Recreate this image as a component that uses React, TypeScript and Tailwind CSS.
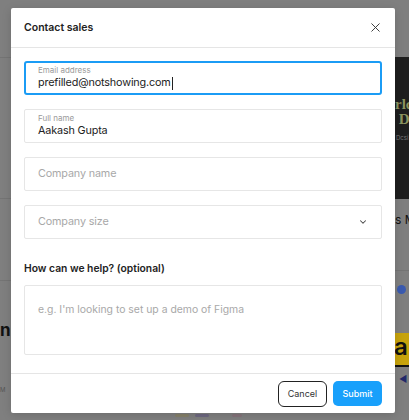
import { ChevronDown, X } from "lucide-react";

function Field({
  label,
  value,
  placeholder,
  active,
}: {
  label?: string;
  value?: string;
  placeholder?: string;
  active?: boolean;
}) {
  return (
    <div
      className={`h-[34px] flex flex-col justify-center bg-white ${
        active ? "border-2 border-[#1b9cf5] rounded-[3px] px-[12px]" : "border border-[#e6e6e6] rounded-[2px] px-[13px]"
      }`}
    >
      {label ? (
        <>
          <span className="text-[8px] leading-[10px] text-[#9a9a9a]">{label}</span>
          <span className="text-[10.8px] tracking-[-0.15px] leading-[16px] text-[#222] flex items-center">
            {value}
            {active && <span className="inline-block w-px h-[13px] bg-[#222] ml-px" />}
          </span>
        </>
      ) : (
        <span className="text-[10.8px] tracking-[-0.15px] text-[#a8a8a8]">{placeholder}</span>
      )}
    </div>
  );
}

export default function App() {
  return (
    <div className="relative w-[409px] h-[420px] overflow-hidden bg-[#7f7f7f] font-['Inter',sans-serif]">
      {/* dimmed page behind the dialog */}
      <div className="absolute left-0 top-[57px] w-[11px] h-px bg-[#747474]" />
      <div className="absolute left-0 top-[198px] w-[11px] h-px bg-[#747474]" />
      <div className="absolute left-0 top-[280px] w-[11px] h-px bg-[#747474]" />
      <div className="absolute left-0 top-[322px] text-[17px] font-bold text-[#111] leading-none">n</div>
      <div className="absolute left-0 top-[387px] text-[6px] text-[#555] leading-none">M</div>

      <div className="absolute right-0 top-[57px] w-[14px] h-[142px] bg-[#1e1e1e] overflow-hidden">
        <div className="absolute left-0 top-[40px] w-[14px] overflow-hidden font-['Liberation_Serif',serif] font-bold text-[15px] leading-[15px] text-[#8c9460] whitespace-nowrap">
          rlc
          <br />
          &nbsp;D
        </div>
        <div className="absolute left-[1px] top-[76px] text-[6px] text-[#777]">Dcsi</div>
      </div>
      <div className="absolute left-[395px] top-[214px] w-[14px] overflow-hidden text-[12px] text-[#111] leading-none whitespace-nowrap">s M</div>
      <div className="absolute right-0 top-[270px] w-[14px] h-px bg-[#747474]" />
      <div className="absolute left-[397px] top-[285px] w-[9px] h-[9px] rounded-full bg-[#3b5bb0]" />
      <div className="absolute right-0 top-[333px] w-[14px] h-[32px] bg-[#c7a30c] overflow-hidden">
        <span className="absolute left-[-1px] top-[2px] text-[24px] font-semibold text-[#111] leading-none">a</span>
      </div>
      <div className="absolute right-0 top-[365px] w-[14px] h-[2px] bg-[#111]" />
      <div className="absolute left-[399px] top-[374px] text-[9px] text-[#23296a] leading-none">◀</div>
      <div className="absolute left-[175px] top-[414px] w-[14px] h-[3px] rounded-full bg-[#85806a]" />
      <div className="absolute left-[195px] top-[414px] w-[14px] h-[3px] rounded-full bg-[#6e6880]" />
      <div className="absolute left-[232px] top-[414px] w-[10px] h-[3px] rounded-full bg-[#84737a]" />

      {/* dialog */}
      <div className="absolute left-[11px] top-[8px] w-[384px] h-[405px] bg-white rounded-[2px] flex flex-col shadow-[0_2px_10px_rgba(0,0,0,0.15)]">
        <div className="h-[40px] flex items-center justify-between px-[13px] border-b border-[#e5e5e5]">
          <span className="text-[10.5px] font-semibold text-[#222]">Contact sales</span>
          <X size={15} strokeWidth={1.5} className="text-[#333] mr-[-1px]" />
        </div>

        <div className="flex-1 flex flex-col px-[13px] pt-[13px]">
          <div className="flex flex-col gap-[14px]">
            <Field label="Email address" value="prefilled@notshowing.com" active />
            <Field label="Full name" value="Aakash Gupta" />
            <Field placeholder="Company name" />
            <div className="h-[34px] flex items-center justify-between px-[13px] border border-[#e6e6e6] rounded-[2px]">
              <span className="text-[10.8px] tracking-[-0.15px] text-[#a8a8a8]">Company size</span>
              <ChevronDown size={10} strokeWidth={2.5} className="text-[#444]" />
            </div>
          </div>

          <div className="mt-[22px] text-[10.3px] font-semibold text-[#222] leading-[14px]">How can we help? (optional)</div>
          <div className="mt-[10px] h-[70px] border border-[#e6e6e6] rounded-[2px] px-[13px] pt-[9px]">
            <span className="text-[10.4px] text-[#a8a8a8]">e.g. I&apos;m looking to set up a demo of Figma</span>
          </div>
        </div>

        <div className="h-[40px] border-t border-[#e5e5e5] flex items-center justify-end gap-[6px] px-[13px]">
          <button className="w-[49px] h-[26px] border border-[#222] rounded-[6px] text-[9px] text-[#333]">Cancel</button>
          <button className="w-[49px] h-[25px] bg-[#18a0fb] rounded-[5px] text-[9px] text-white font-medium">Submit</button>
        </div>
      </div>
    </div>
  );
}
